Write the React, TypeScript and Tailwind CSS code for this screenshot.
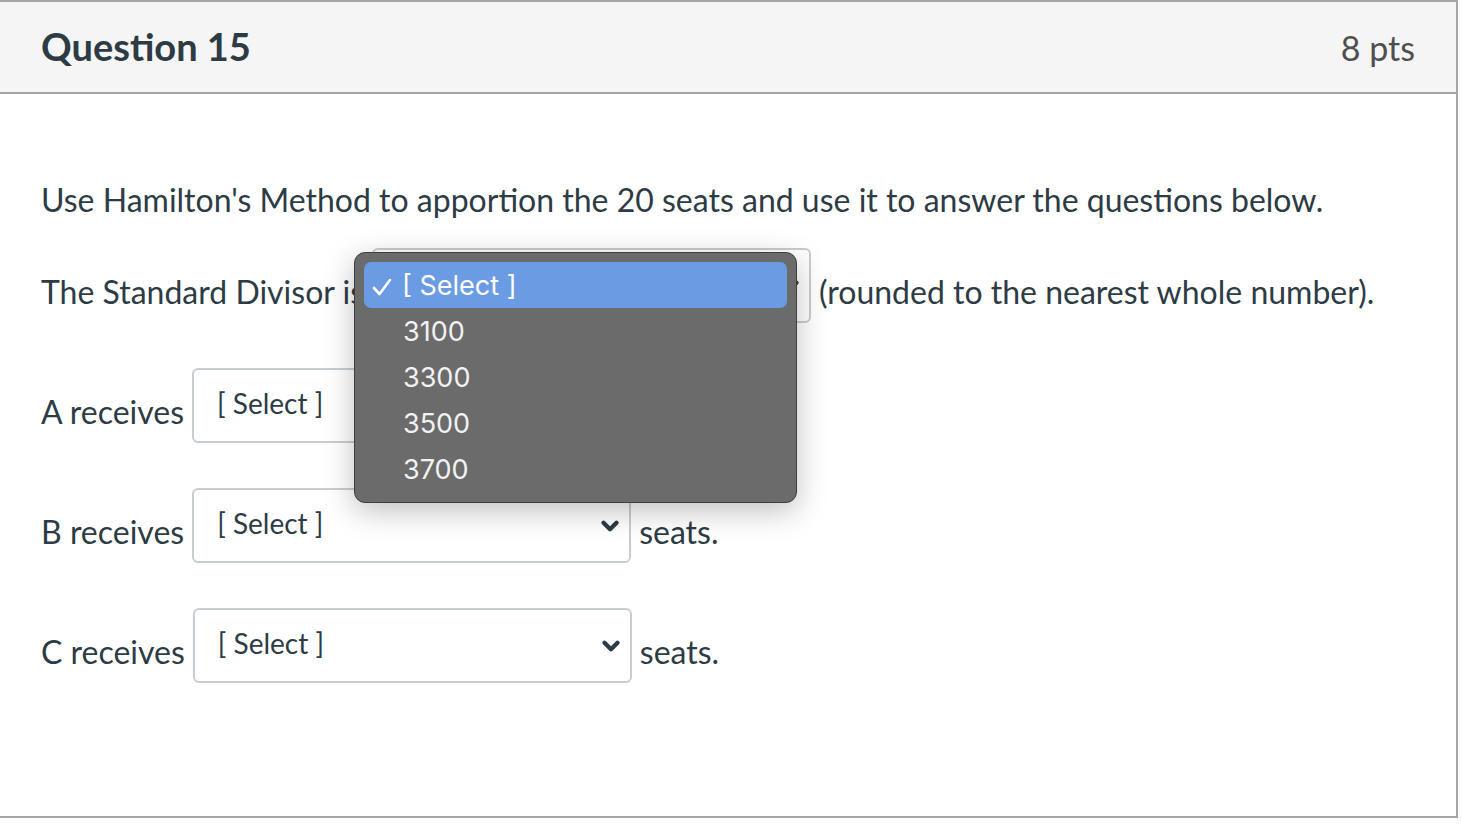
import { ChevronDown } from "lucide-react";

function SelectBox() {
  return (
    <div className="w-[439px] h-[75px] shrink-0 flex items-center justify-between rounded-[6px] border-2 border-[#c7cdd1] bg-white pl-[23px] pr-[6px] text-[#2d3b45]">
      <span className="text-[28px] -mt-[6px]">[ Select ]</span>
      <ChevronDown size={26} strokeWidth={4} className="text-[#2d3b45]" />
    </div>
  );
}

function Row({ label }: { label: string }) {
  return (
    <div className="flex items-center gap-[8px] mt-[45px]">
      <span className="pt-[12px]">{label}</span>
      <SelectBox />
      <span className="pt-[12px]">seats.</span>
    </div>
  );
}

const options = ["3100", "3300", "3500", "3700"];

export default function App() {
  return (
    <div className="relative w-[1462px] h-[824px] bg-white font-['Lato',sans-serif]">
      <div className="w-[1458px] h-[818px] border-t-2 border-r-2 border-b-2 border-[#a5a5a5] flex flex-col">
        <div className="h-[92px] shrink-0 bg-[#f5f5f5] border-b-2 border-[#a5a5a5] flex items-center justify-between pl-[41px] pr-[41px]">
          <h2 className="text-[38px] font-bold text-[#2d3b45] -mt-[2px]">Question 15</h2>
          <span className="text-[34px] text-[#4f4f4f]">8 pts</span>
        </div>
        <div className="pl-[41px] pt-[84px] text-[32px] text-[#2d3b45]">
          <p className="leading-[44px]">
            Use Hamilton's Method to apportion the 20 seats and use it to answer the questions below.
          </p>
          <div className="flex items-center gap-[8px] mt-[26px]">
            <span className="pt-[12px]">The Standard Divisor is</span>
            <SelectBox />
            <span className="pt-[12px]">(rounded to the nearest whole number).</span>
          </div>
          <Row label="A receives" />
          <Row label="B receives" />
          <Row label="C receives" />
        </div>
      </div>

      <div className="absolute left-[354px] top-[252px] w-[443px] h-[251px] rounded-[11px] border border-[#3e3e3e] bg-[#6b6b6b] px-[9px] pt-[9px] shadow-[0_8px_30px_rgba(0,0,0,0.25)] font-['Inter',sans-serif] text-[27px] text-white">
        <div className="h-[46px] rounded-[7px] bg-[#6a9be3] flex items-center pl-[8px] pt-[3px]">
          <svg width="20" height="18" viewBox="0 0 20 18" className="mr-[10px]">
            <path d="M2 10 L7.5 16 L18 2" fill="none" stroke="white" strokeWidth="2.6" strokeLinecap="round" strokeLinejoin="round" />
          </svg>
          <span>[ Select ]</span>
        </div>
        {options.map((o) => (
          <div key={o} className="h-[46px] flex items-center pl-[39px] pt-[3px] text-[#f2f2f2]">
            {o}
          </div>
        ))}
      </div>
    </div>
  );
}
